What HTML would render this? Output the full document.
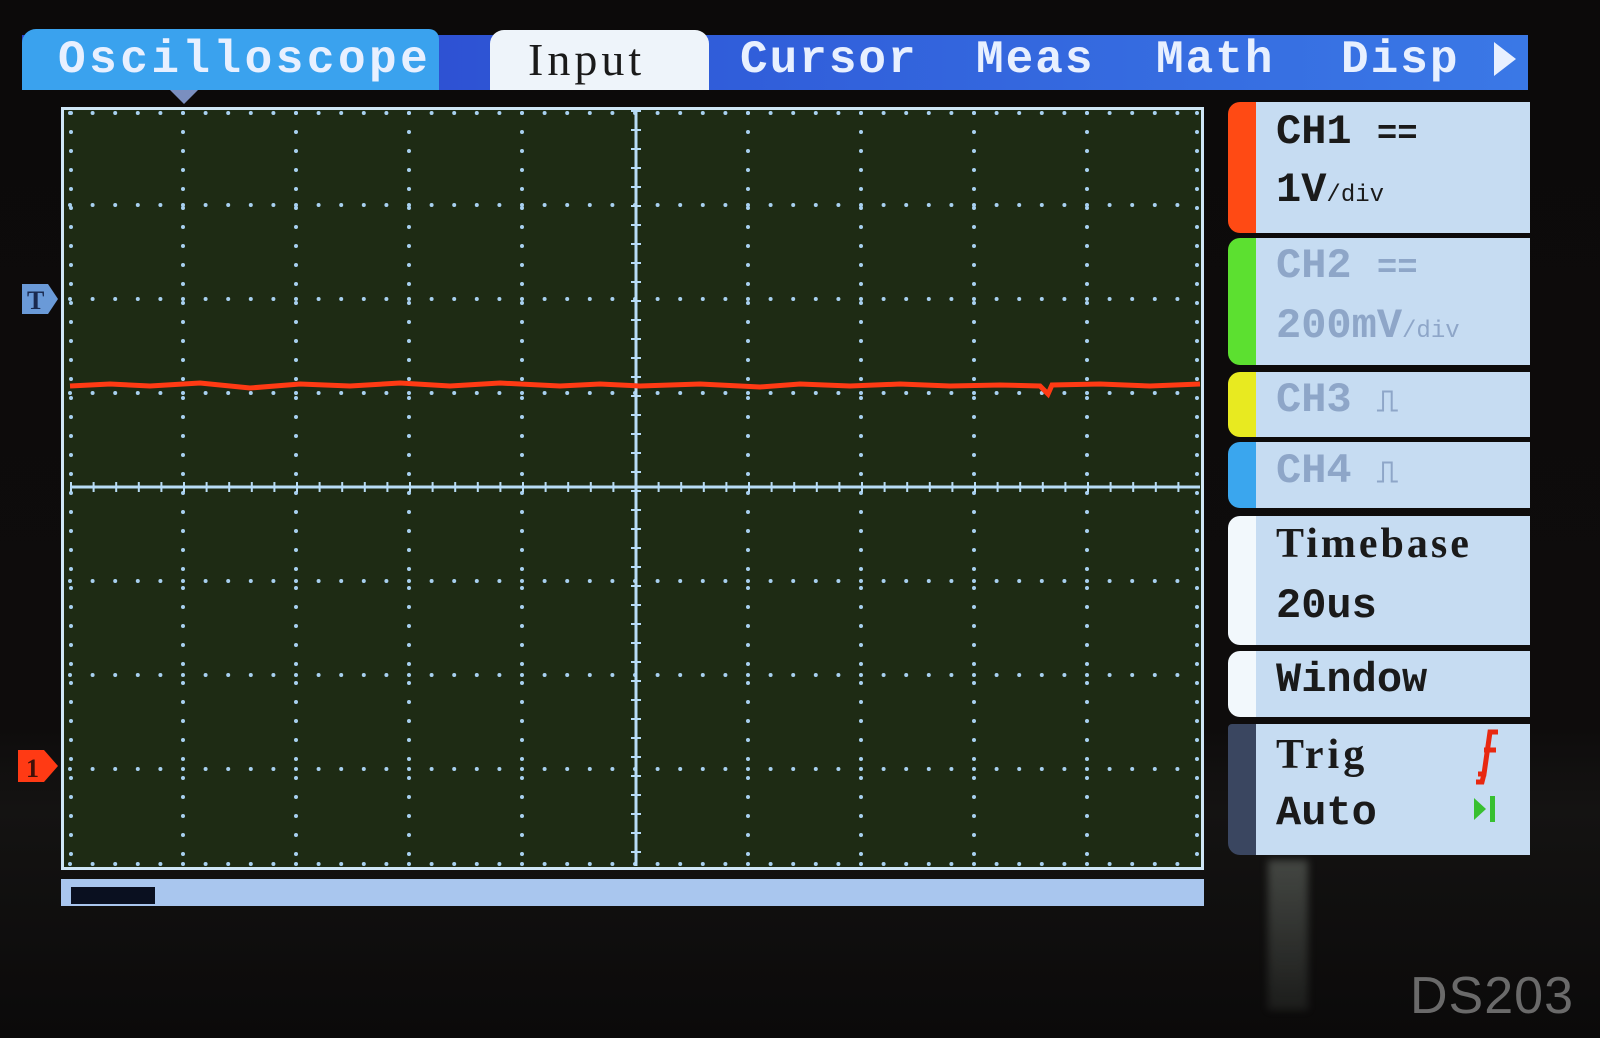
<!DOCTYPE html>
<html><head><meta charset="utf-8">
<style>
html,body{margin:0;padding:0;}
body{width:1600px;height:1038px;overflow:hidden;position:relative;
background:linear-gradient(180deg,#0c0a0a 0%,#0e0c0c 70%,#141312 78%,#0b0a0a 100%);
font-family:"Liberation Mono",monospace;font-weight:bold;}
.abs{position:absolute;}
.bar{left:22px;top:35px;width:1506px;height:55px;background:linear-gradient(90deg,#2a3fc8,#2f5ad8 40%,#3a78e6 100%);}
.osc{left:22px;top:29px;width:417px;height:61px;background:#3aa2ee;border-radius:14px 10px 0 0;}
.inp{left:490px;top:30px;width:219px;height:60px;background:#eef4fa;border-radius:14px 14px 0 0;}
.tab{font-size:46px;color:#e8f0ff;top:35px;line-height:50px;letter-spacing:2px;}
.grid{left:61px;top:107px;width:1143px;height:763px;background:#1e2b14;border:3px solid #cfe6f6;box-sizing:border-box;}
.bb{left:61px;top:879px;width:1143px;height:27px;background:#a9c6ee;}
.bbk{left:71px;top:887px;width:84px;height:17px;background:#0a1020;}
.pan{left:1256px;width:274px;background:#c6dcf2;}
.strip{left:1228px;width:30px;border-radius:12px 0 0 12px;}
.pt{font-size:42px;color:#1a1a1a;left:1276px;line-height:44px;}
.dis{color:#8ea6c8;}
.small{font-size:24px;font-weight:normal;}
</style></head><body>
<div class="abs bar"></div>
<div class="abs osc"></div>
<div class="abs inp"></div>
<div class="abs tab" style="left:58px;letter-spacing:3.5px;">Oscilloscope</div>
<div class="abs tab" style="left:528px;color:#1a1a1a;font-family:'Liberation Serif',serif;font-weight:normal;letter-spacing:4px;">Input</div>
<div class="abs tab" style="left:740px;">Cursor</div>
<div class="abs tab" style="left:976px;">Meas</div>
<div class="abs tab" style="left:1156px;">Math</div>
<div class="abs tab" style="left:1341px;">Disp</div>
<div class="abs" style="left:1494px;top:42px;width:0;height:0;border-top:17px solid transparent;border-bottom:17px solid transparent;border-left:22px solid #e8f0ff;"></div>
<div class="abs" style="left:170px;top:90px;width:0;height:0;border-left:14px solid transparent;border-right:14px solid transparent;border-top:14px solid #7a8fc0;"></div>

<div class="abs grid"></div>
<svg class="abs" style="left:0;top:0" width="1600" height="1038">
<g stroke="#a8d0f0" stroke-width="4" stroke-linecap="round">
<g stroke-dasharray="0 19">
<line x1="183" y1="113" x2="183" y2="866"/><line x1="296" y1="113" x2="296" y2="866"/>
<line x1="409" y1="113" x2="409" y2="866"/><line x1="522" y1="113" x2="522" y2="866"/>
<line x1="748" y1="113" x2="748" y2="866"/><line x1="861" y1="113" x2="861" y2="866"/>
<line x1="974" y1="113" x2="974" y2="866"/><line x1="1087" y1="113" x2="1087" y2="866"/>
<line x1="71" y1="113" x2="71" y2="866"/><line x1="1197" y1="113" x2="1197" y2="866"/>
</g>
<g stroke-dasharray="0 22.6">
<line x1="70" y1="205" x2="1200" y2="205"/><line x1="70" y1="299" x2="1200" y2="299"/>
<line x1="70" y1="393" x2="1200" y2="393"/><line x1="70" y1="581" x2="1200" y2="581"/>
<line x1="70" y1="675" x2="1200" y2="675"/><line x1="70" y1="769" x2="1200" y2="769"/>
<line x1="70" y1="113" x2="1200" y2="113"/><line x1="70" y1="864" x2="1200" y2="864"/>
</g>
</g>
<line x1="70" y1="487" x2="1200" y2="487" stroke="#b8dcf6" stroke-width="3"/>
<line x1="636" y1="110" x2="636" y2="866" stroke="#b8dcf6" stroke-width="3"/>
<g stroke="#b8dcf6" stroke-width="10" stroke-dasharray="2 20.6"><line x1="70" y1="487" x2="1200" y2="487"/></g>
<g stroke="#b8dcf6" stroke-width="10" stroke-dasharray="2 17"><line x1="636" y1="110" x2="636" y2="866"/></g>
<polyline fill="none" stroke="#ff3a14" stroke-width="5" points="70,386 110,384 150,386 200,383 250,388 300,384 350,386 400,383 450,386 500,383 560,386 600,384 640,386 700,384 760,387 800,384 850,386 900,384 950,386 1000,385 1040,386 1048,394 1052,385 1100,384 1150,386 1200,384"/>
<path d="M22 284h26l10 15-10 15H22z" fill="#6a9ad8"/>
<text x="27" y="309" font-family="Liberation Serif" font-size="26" fill="#1a2a50">T</text>
<path d="M18 750h26l14 16-14 16H18z" fill="#ff3a14"/>
<text x="26" y="777" font-family="Liberation Serif" font-size="26" fill="#401008">1</text>
</svg>
<div class="abs bb"></div><div class="abs bbk"></div>

<div class="abs strip" style="top:102px;height:131px;background:#ff4a14"></div>
<div class="abs pan" style="top:102px;height:131px"></div>
<div class="abs pt" style="top:110px">CH1 <span style="font-size:34px">==</span></div>
<div class="abs pt" style="top:168px">1V<span class="small">/div</span></div>

<div class="abs strip" style="top:238px;height:127px;background:#5ce030"></div>
<div class="abs pan" style="top:238px;height:127px"></div>
<div class="abs pt dis" style="top:244px">CH2 <span style="font-size:34px">==</span></div>
<div class="abs pt dis" style="top:304px">200mV<span class="small">/div</span></div>

<div class="abs strip" style="top:372px;height:65px;background:#e8ea20"></div>
<div class="abs pan" style="top:372px;height:65px"></div>
<div class="abs pt dis" style="top:378px">CH3 <span style="font-size:30px">⎍</span></div>

<div class="abs strip" style="top:442px;height:66px;background:#3aa6ee"></div>
<div class="abs pan" style="top:442px;height:66px"></div>
<div class="abs pt dis" style="top:449px">CH4 <span style="font-size:30px">⎍</span></div>

<div class="abs strip" style="top:516px;height:129px;background:#f2f8fc"></div>
<div class="abs pan" style="top:516px;height:129px"></div>
<div class="abs pt" style="top:522px;font-family:'Liberation Serif',serif;letter-spacing:3px;">Timebase</div>
<div class="abs pt" style="top:584px">20us</div>

<div class="abs strip" style="top:651px;height:66px;background:#f2f8fc"></div>
<div class="abs pan" style="top:651px;height:66px"></div>
<div class="abs pt" style="top:658px">Window</div>

<div class="abs strip" style="top:724px;height:131px;background:#3a4660;border-radius:4px 0 0 12px"></div>
<div class="abs pan" style="top:724px;height:131px"></div>
<div class="abs pt" style="top:733px;font-family:'Liberation Serif',serif;letter-spacing:4px;">Trig</div>
<div class="abs pt" style="top:791px">Auto</div>
<svg class="abs" style="left:1470px;top:728px" width="40" height="100">
<path d="M28 4h-8l-6 42H8M14 22h12M14 46l-2 8h-6" fill="none" stroke="#e82810" stroke-width="5"/>
<path d="M4 70l12 11-12 11z" fill="#38c030"/><rect x="20" y="68" width="5" height="26" fill="#38c030"/>
</svg>

<div class="abs" style="left:1268px;top:860px;width:40px;height:150px;background:linear-gradient(180deg,rgba(160,170,160,0.35),rgba(120,130,120,0.15));filter:blur(4px)"></div>
<div class="abs" style="left:1410px;top:966px;font-family:'Liberation Sans',sans-serif;font-weight:normal;font-size:52px;color:#6a6a6a;letter-spacing:1px;">DS203</div>
</body></html>
